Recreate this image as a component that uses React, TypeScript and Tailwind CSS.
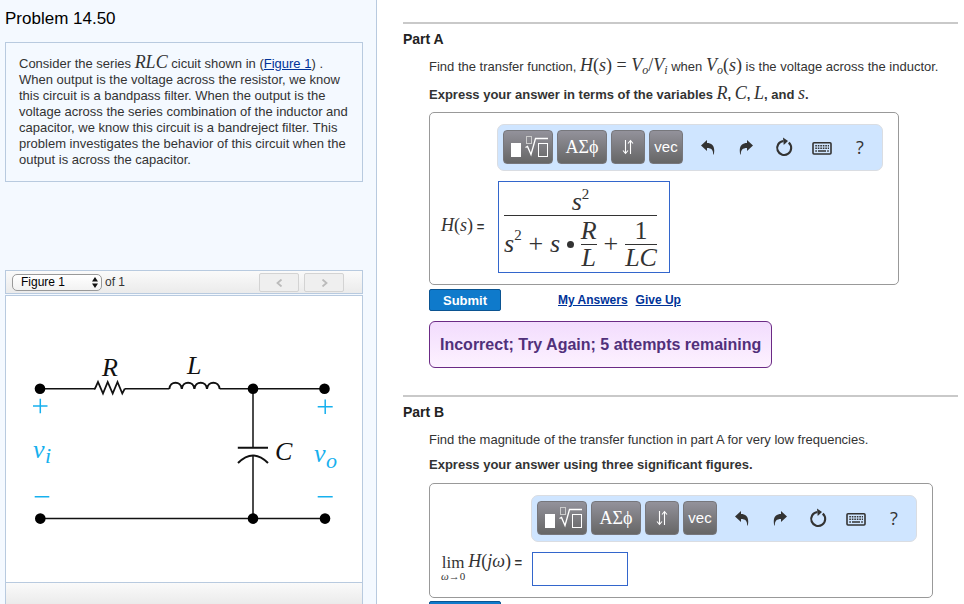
import React from "react";

const M = ({ children }: { children: React.ReactNode }) => (
  <i className="font-['Liberation_Serif',serif] text-[18px] font-normal leading-[12px]">
    {children}
  </i>
);

const Up = ({ children }: { children: React.ReactNode }) => (
  <span className="font-['Liberation_Serif',serif] text-[18px] font-normal not-italic leading-[12px]">
    {children}
  </span>
);

const Sub = ({ children }: { children: React.ReactNode }) => (
  <sub className="text-[12px] leading-none">{children}</sub>
);

const Circuit = () => {
  return (
    <svg
      viewBox="6 296 356 286"
      className="block w-full"
      role="img"
      aria-label="Series RLC circuit"
    >
      <g fill="none" stroke="#111" strokeWidth="1.5">
        <path
          strokeWidth="1.8"
          d="M94 388.7L95 388.7L98 382L103 393.5L107.7 382L112.7 393.5L117.5 382L122.3 393.5L124.8 388.7"
        />
        <path d="M40 388.7H95M124.8 388.7H169.3" />
        <path
          strokeWidth="2"
          d="M169.3 389C170 380.5 181 380.5 181.8 389C182.6 380.5 193.6 380.5 194.4 389C195.2 380.5 206.2 380.5 207 389C207.8 380.5 218.8 380.5 219.7 389"
        />
        <path d="M219.7 388.7H324.5M253 388.7V447.5M253 455.5V518.5M40 518.5H325" />
        <path strokeWidth="2" d="M237.8 447.7H268M238 463Q253 447.8 268 463" />
      </g>
      <g fill="#000">
        <circle cx="40" cy="388.7" r="5.3" />
        <circle cx="253" cy="388.7" r="5.3" />
        <circle cx="324.5" cy="388.7" r="5.3" />
        <circle cx="40.3" cy="518.6" r="5.3" />
        <circle cx="253" cy="518.6" r="5.3" />
        <circle cx="325" cy="518.6" r="5.3" />
      </g>
      <path
        stroke="#16b0ee"
        strokeWidth="1.5"
        d="M33 406H47.5M40.3 398.7V413.3M317.7 406.7H332.7M325.2 399.4V414M34.7 496.7H49.3M317.7 496.7H332.7"
      />
      <g
        fontFamily="'Liberation Serif', serif"
        fontStyle="italic"
        fontSize="26"
        fill="#111"
      >
        <text x="102" y="376">R</text>
        <text x="187" y="374">L</text>
        <text x="275" y="460">C</text>
        <g fill="#16b0ee">
          <text x="33" y="458">v</text>
          <text x="45" y="463" fontSize="22">i</text>
          <text x="314" y="462">v</text>
          <text x="326" y="468" fontSize="22">o</text>
        </g>
      </g>
    </svg>
  );
};

const grayButton =
  "flex h-[34px] items-center justify-center rounded-[4px] border border-[#77777c] bg-linear-to-b from-[#93929b] to-[#666] text-white";
const iconButton = "flex h-[34px] w-[38px] items-center justify-center text-[#333]";

const Toolbar = () => {
  return (
    <div className="flex w-max gap-1 rounded-[7px] border border-[#dadde2] bg-[#cfe5ff] pt-[5px] pr-[3px] pb-[6px] pl-[5px]">
      <button className={`${grayButton} w-[50px]`} aria-label="Templates">
        <svg width="40" height="24" viewBox="0 0 40 24" fill="none" stroke="#fff">
          <rect x="3" y="8" width="10" height="14" fill="#fff" stroke="none" />
          <rect x="18.5" y="1.5" width="5" height="7" stroke="#ccc" />
          <path d="M17.5 12.5L19.5 11.5L23 19.5L27.5 3.5H40" strokeWidth="1.3" />
          <rect x="30.5" y="8.5" width="9" height="13" />
        </svg>
      </button>
      <button
        className={`${grayButton} w-[50px] font-['Liberation_Serif',serif] text-[18px]`}
      >
        ΑΣϕ
      </button>
      <button className={`${grayButton} w-[34px]`} aria-label="Subscript and superscript">
        <svg width="14" height="16" viewBox="0 0 14 16" fill="none" stroke="#fff" strokeWidth="1.1">
          <path d="M4.5 1V14M2 11.5L4.5 14.5L7 11.5M9.5 15V2M7 4.5L9.5 1.5L12 4.5" />
        </svg>
      </button>
      <button
        className={`${grayButton} w-[34px] font-['Liberation_Sans',sans-serif] text-[15px]`}
      >
        vec
      </button>
      <div className="ml-0.5 flex">
        <button className={iconButton} aria-label="Undo">
          <svg width="14" height="16" viewBox="0 0 14 16" fill="currentColor">
            <path d="M0 6.5L6 1V4C11 4 14.5 7 12.8 15.5H12.2C12.2 11 10.5 9 6 9V12Z" />
          </svg>
        </button>
        <button className={iconButton} aria-label="Redo">
          <svg width="14" height="16" viewBox="0 0 14 16" fill="currentColor">
            <path d="M14 6.5L8 1V4C3 4 -0.5 7 1.2 15.5H1.8C1.8 11 3.5 9 8 9V12Z" />
          </svg>
        </button>
        <button className={iconButton} aria-label="Reset">
          <svg width="18" height="20" viewBox="0 0 18 20" fill="none">
            <path
              d="M13.7 5.6A7 7 0 1 1 8.3 4"
              stroke="currentColor"
              strokeWidth="2.1"
            />
            <path d="M8 0.5L13 4L8.7 8Z" fill="currentColor" />
          </svg>
        </button>
        <button className={iconButton} aria-label="Keyboard">
          <svg width="20" height="16" viewBox="0 0 20 16" fill="none" stroke="currentColor">
            <rect x="1" y="3.7" width="18" height="11.3" rx="1" strokeWidth="1.6" />
            <path strokeWidth="1.4" strokeDasharray="1.6 0.9" d="M3.3 6.7H17M3.3 9.2H17" />
            <path strokeWidth="1.4" d="M3.3 12H4.9M6 12H14M15.2 12H16.8" />
          </svg>
        </button>
        <button
          className={`${iconButton} font-['Open_Sans',sans-serif] text-[18px]`}
          aria-label="Help"
        >
          ?
        </button>
      </div>
    </div>
  );
};

const submitButton =
  "h-[22px] w-[72px] rounded-[2px] border border-[#0b5491] bg-[#0f7acb] text-[13px] font-bold leading-none text-white";

const App = () => {
  return (
    <div className="flex h-screen overflow-hidden bg-white font-['Liberation_Sans',Arial,sans-serif] text-[13px] text-[#333]">
      <aside className="flex w-[377px] shrink-0 flex-col border-r border-[#b8cadf] bg-[#f4f9ff] pt-[9px] pr-[13px] pl-[5px]">
        <h1 className="text-[17px] leading-5 text-black">Problem 14.50</h1>
        <p className="mt-[13px] border border-[#b8cadf] p-[13px] pr-3 leading-4">
          Consider the series <M>RLC</M> cicuit shown in (
          <a href="#figure" className="text-[#039] underline">
            Figure 1
          </a>
          ) . When output is the voltage across the resistor, we know this
          circuit is a bandpass filter. When the output is the voltage across
          the series combination of the inductor and capacitor, we know this
          circuit is a bandreject filter. This problem investigates the behavior
          of this circuit when the output is across the capacitor.
        </p>

        <div className="mt-[88px] flex h-6 items-center border border-[#b8cadf] bg-linear-to-b from-[#fafafa] to-[#ebebeb] pr-[18px] pl-[6px] text-[12px]">
          <div className="relative">
            <select
              aria-label="Figure"
              className="block h-[17px] w-[90px] appearance-none rounded-[5px] border border-[#999] bg-linear-to-b from-white to-[#f2f2f2] pl-2 leading-[15px] text-black"
            >
              <option>Figure 1</option>
            </select>
            <svg
              width="6"
              height="11"
              viewBox="0 0 6 11"
              className="pointer-events-none absolute top-[3px] right-1"
            >
              <path d="M0 4.5L3 0L6 4.5ZM0 6.5L3 11L6 6.5Z" fill="#111" />
            </svg>
          </div>
          <span className="ml-[3px] leading-4">of 1</span>
          <div className="ml-auto flex gap-[5px] pt-px">
            <button
              aria-label="Previous figure"
              className="flex h-[19px] w-10 items-center justify-center rounded-[2px] border border-[#d3d3d3] bg-[#efefef]"
            >
              <svg width="7" height="8" viewBox="0 0 7 8" fill="none" stroke="#bbb" strokeWidth="1.8">
                <path d="M5.5 0.5L1.5 4L5.5 7.5" />
              </svg>
            </button>
            <button
              aria-label="Next figure"
              className="flex h-[19px] w-10 items-center justify-center rounded-[2px] border border-[#d3d3d3] bg-[#efefef]"
            >
              <svg width="7" height="8" viewBox="0 0 7 8" fill="none" stroke="#bbb" strokeWidth="1.8">
                <path d="M1.5 0.5L5.5 4L1.5 7.5" />
              </svg>
            </button>
          </div>
        </div>
        <div id="figure" className="mt-px border border-[#b8cadf] bg-white">
          <Circuit />
        </div>
        <div className="min-h-5 flex-1 border-x border-[#b8cadf] bg-linear-to-b from-[#fafafa] to-[#ebebeb]" />
      </aside>

      <main className="min-w-0 flex-1 pt-[22px] pr-[6px] pl-[26px]">
        <section className="border-t-2 border-[#c9c9c9] pt-[5px]">
          <h2 className="text-[14px] font-bold leading-5 text-[#222]">Part A</h2>
          <div className="pl-[26px]">
            <p className="mt-2 whitespace-nowrap leading-5">
              Find the transfer function, <M>H</M>
              <Up>(</Up>
              <M>s</M>
              <Up>) = </Up>
              <M>
                V<Sub>o</Sub>
              </M>
              <Up>/</Up>
              <M>
                V<Sub>i</Sub>
              </M>{" "}
              when{" "}
              <M>
                V<Sub>o</Sub>
              </M>
              <Up>(</Up>
              <M>s</M>
              <Up>)</Up> is the voltage across the inductor.
            </p>
            <p className="mt-2 font-bold leading-5">
              Express your answer in terms of the variables <M>R</M>, <M>C</M>,{" "}
              <M>L</M>, and <M>s</M>.
            </p>

            <div className="mt-[7px] grid w-max grid-cols-[56px_auto] gap-y-[10px] rounded-[5px] border border-[#999] py-[11px] pr-[15px] pl-[11px]">
              <div className="col-start-2">
                <Toolbar />
              </div>
              <div id="label-a" className="self-center font-bold">
                <M>H</M>
                <Up>(</Up>
                <M>s</M>
                <Up>)</Up> =
              </div>
              <div
                role="textbox"
                tabIndex={0}
                aria-labelledby="label-a"
                className="ml-px flex h-[92px] w-[172px] flex-col border border-[#36c] pr-3 pl-[5px] font-['Liberation_Serif',serif] text-[26px] italic leading-[26px]"
              >
                <div className="flex h-[34px] items-end justify-center border-b border-[#333]">
                  s<sup className="top-0 self-start pt-1 text-[15px] leading-4 not-italic">2</sup>
                </div>
                <div className="flex flex-1 items-center justify-between">
                  <span className="flex">
                    s<sup className="top-0 -mt-1 text-[15px] leading-4 not-italic">2</sup>
                  </span>
                  <span className="not-italic">+</span>
                  <span>s</span>
                  <span className="size-[7px] rounded-full bg-[#333]" />
                  <span className="flex flex-col text-center">
                    <span className="border-b border-[#333]">R</span>
                    <span>L</span>
                  </span>
                  <span className="not-italic">+</span>
                  <span className="flex flex-col text-center">
                    <span className="border-b border-[#333] not-italic">1</span>
                    <span>LC</span>
                  </span>
                </div>
              </div>
            </div>

            <div className="mt-1 flex items-center text-[12px] font-bold">
              <button className={submitButton}>Submit</button>
              <a href="#answers" className="ml-[57px] text-[#039] underline">
                My Answers
              </a>
              <a href="#giveup" className="ml-2 text-[#039] underline">
                Give Up
              </a>
            </div>
            <div className="mt-[10px] w-max rounded-[6px] border border-[#6b2a85] bg-linear-to-b from-[#f2dcfd] to-[#fdf2ff] px-[10px] py-[11px] text-[16px] font-bold leading-[23px] text-[#51307a]">
              Incorrect; Try Again; 5 attempts remaining
            </div>
          </div>
        </section>

        <section className="mt-[27px] border-t-2 border-[#c9c9c9] pt-[5px]">
          <h2 className="text-[14px] font-bold leading-5 text-[#222]">Part B</h2>
          <div className="pl-[26px]">
            <p className="mt-2 leading-5">
              Find the magnitude of the transfer function in part A for very low
              frequencies.
            </p>
            <p className="mt-[5px] font-bold leading-5">
              Express your answer using three significant figures.
            </p>

            <div className="mt-2 grid w-max grid-cols-[90px_auto] gap-y-[10px] rounded-[5px] border border-[#999] py-[11px] pr-[15px] pl-[11px]">
              <div className="col-start-2">
                <Toolbar />
              </div>
              <label htmlFor="answer-b" className="flex pt-px font-bold">
                <span className="flex flex-col items-center">
                  <span className="font-['Liberation_Serif',serif] text-[17px] font-normal leading-5">
                    lim
                  </span>
                  <span className="font-['Liberation_Serif',serif] text-[11px] font-normal leading-[6px]">
                    <i>ω</i>→0
                  </span>
                </span>
                <span className="ml-[3px] whitespace-nowrap leading-5">
                  <M>H</M>
                  <Up>(</Up>
                  <M>jω</M>
                  <Up>)</Up> =
                </span>
              </label>
              <input
                id="answer-b"
                type="text"
                className="ml-px h-[34px] w-24 border border-[#36c] px-1"
              />
            </div>
            <button className={`${submitButton} mt-[3px] block`}>Submit</button>
          </div>
        </section>
      </main>
    </div>
  );
};

export default App;
